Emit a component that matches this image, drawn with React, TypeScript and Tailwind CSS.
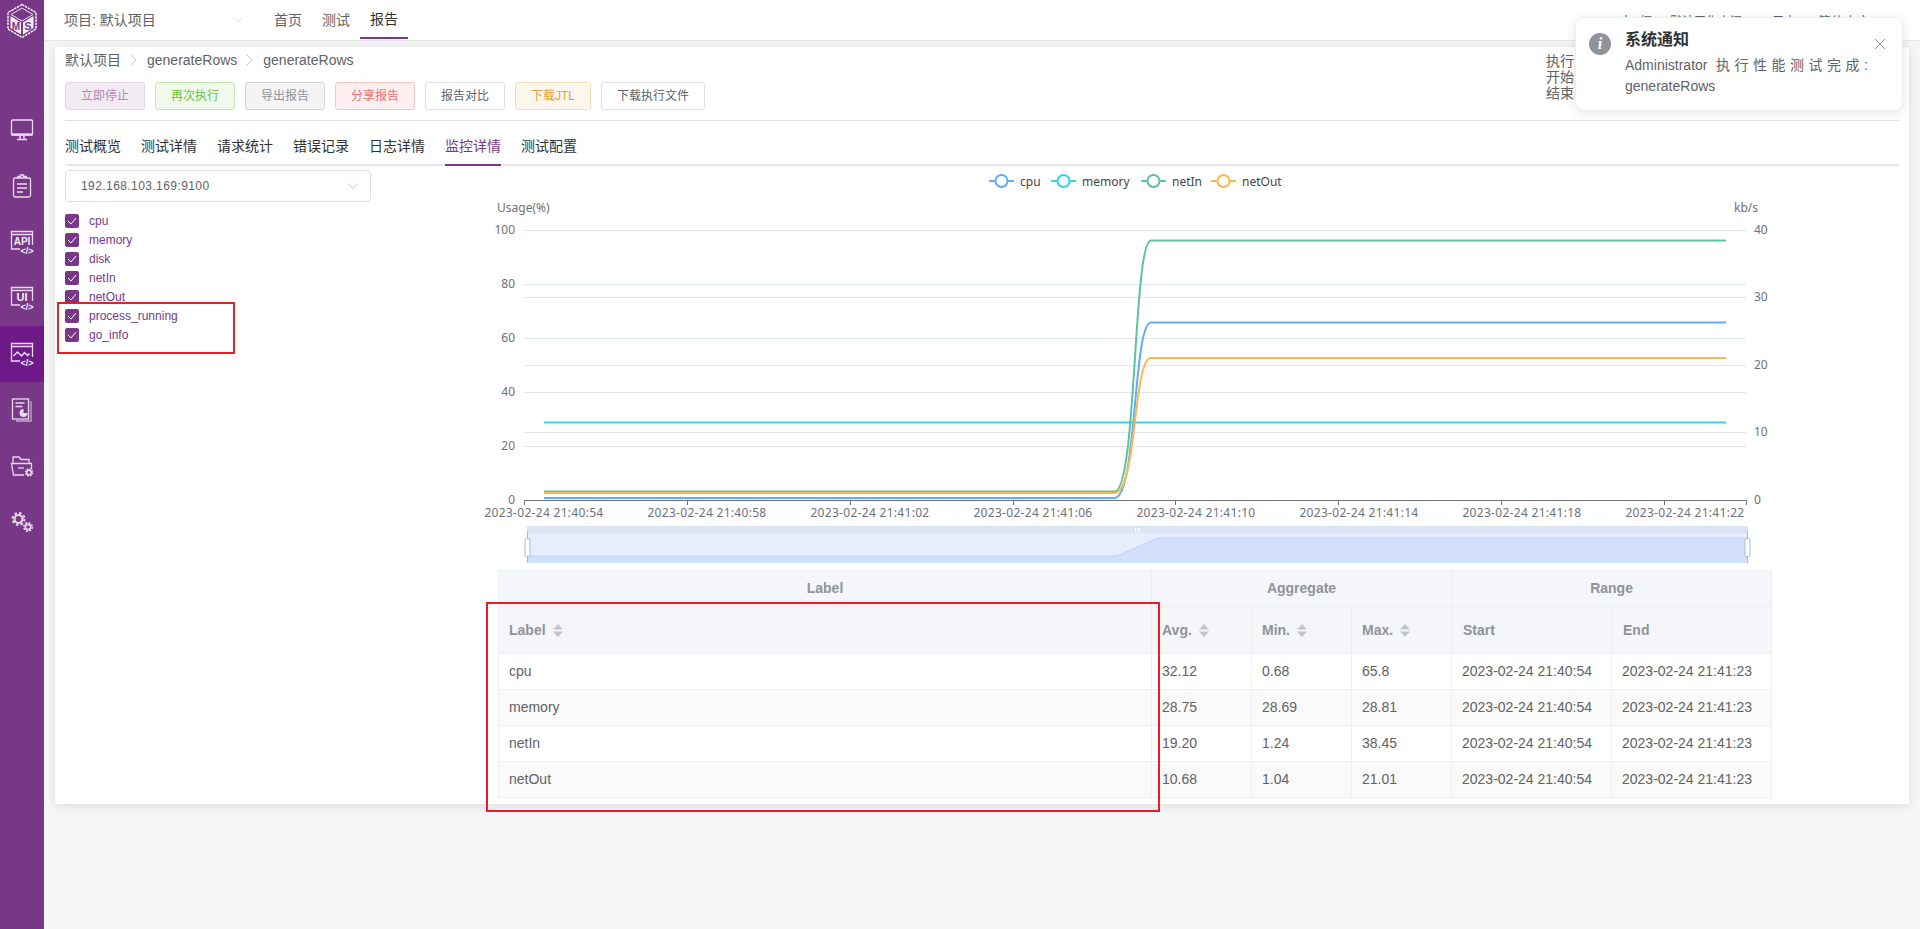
import React from "react";

const purple = "#783887";

const navIcons = [
  // monitor
  <svg key="monitor" width="24" height="22" viewBox="0 0 24 22" fill="none" stroke="#ead9ee" strokeWidth="1.3">
    <rect x="1.5" y="1" width="21" height="15" rx="1" />
    <path d="M1.5 15.5h21" strokeWidth="2.4" />
    <path d="M10 17v2.5M14 17v2.5M7 20.5h10" strokeWidth="1.6" />
  </svg>,
  // clipboard
  <svg key="clip" width="24" height="24" viewBox="0 0 24 24" fill="none" stroke="#ead9ee" strokeWidth="1.3">
    <rect x="3.5" y="4" width="17" height="19" rx="1.5" />
    <path d="M8 4V2.5h2.5V1h3v1.5H16V4" strokeWidth="1.6" />
    <path d="M7 10h10M7 14h10M7 18h6" />
  </svg>,
  // api
  <svg key="api" width="24" height="24" viewBox="0 0 24 24" fill="none" stroke="#ead9ee" strokeWidth="1.3">
    <path d="M10 19H1.5V1.5h21V15M1.5 4.5h21" />
    <text x="12" y="14.5" textAnchor="middle" fontSize="10" fontWeight="700" fill="#f6eef7" stroke="none" fontFamily="Liberation Sans">API</text>
    <text x="17" y="23.5" textAnchor="middle" fontSize="9" fontWeight="700" fill="#f6eef7" stroke="none" fontFamily="Liberation Sans">&lt;/&gt;</text>
  </svg>,
  // ui
  <svg key="ui" width="24" height="24" viewBox="0 0 24 24" fill="none" stroke="#ead9ee" strokeWidth="1.3">
    <path d="M10 19H1.5V1.5h21V15M1.5 4.5h21" />
    <text x="12" y="15" textAnchor="middle" fontSize="11" fontWeight="700" fill="#f6eef7" stroke="none" fontFamily="Liberation Sans">UI</text>
    <text x="17" y="23.5" textAnchor="middle" fontSize="9" fontWeight="700" fill="#f6eef7" stroke="none" fontFamily="Liberation Sans">&lt;/&gt;</text>
  </svg>,
  // performance
  <svg key="perf" width="24" height="24" viewBox="0 0 24 24" fill="none" stroke="#ead9ee" strokeWidth="1.3">
    <path d="M10 19H1.5V1.5h21V15M1.5 4.5h21" />
    <path d="M3.5 14l4-4 4 4 3-3.5 3 3 2-2" strokeWidth="1.5" />
    <text x="17" y="23.5" textAnchor="middle" fontSize="9" fontWeight="700" fill="#f6eef7" stroke="none" fontFamily="Liberation Sans">&lt;/&gt;</text>
  </svg>,
  // report
  <svg key="report" width="22" height="24" viewBox="0 0 22 24" fill="none" stroke="#ead9ee" strokeWidth="1.3">
    <rect x="1.5" y="1" width="16" height="20" />
    <path d="M20 3v20H5" strokeOpacity=".7" />
    <path d="M4.5 5h9M4.5 8.5h7" />
    <path d="M12.5 11a4 4 0 1 0 4 4h-4z" fill="#ead9ee" stroke="none" />
  </svg>,
  // folder
  <svg key="folder" width="24" height="22" viewBox="0 0 24 22" fill="none" stroke="#ead9ee" strokeWidth="1.3">
    <path d="M14 20H3.5L1.5 8.5h20v6M3 8V2h6l2 2.5h8V8" />
    <path d="M8 13h6" />
    <circle cx="19" cy="17.5" r="2.3" strokeWidth="1.6" />
    <circle cx="19" cy="17.5" r="3.6" strokeWidth="1.4" strokeDasharray="1.6 1.2" />
  </svg>,
  // settings
  <svg key="gears" width="24" height="22" viewBox="0 0 24 22" fill="none" stroke="#ead9ee">
    <circle cx="8.5" cy="8" r="4" strokeWidth="2.2" />
    <circle cx="8.5" cy="8" r="6" strokeWidth="2" strokeDasharray="2.4 2.3" />
    <circle cx="18" cy="16" r="2.6" strokeWidth="1.7" />
    <circle cx="18" cy="16" r="4.2" strokeWidth="1.6" strokeDasharray="1.9 1.4" />
  </svg>,
];

const Logo = () => (
  <svg width="32" height="36" viewBox="0 0 32 36" fill="none">
    <path d="M16 1.5 30 9.5V26L16 34.5 2 26V9.5z" stroke="#fff" strokeWidth="1.4" strokeDasharray="2.5 .8" />
    <path d="M16 5 27 11.5 16 18 5 11.5z" fill="#783887" stroke="#f0e6f2" strokeWidth="1" />
    <path d="M4.5 13 15 19.5V31.5L4.5 25z" fill="#f7f0f8" />
    <path d="M27.5 13 17 19.5V31.5L27.5 25z" fill="#f7f0f8" />
    <text x="10" y="27" textAnchor="middle" fontSize="10" fontWeight="700" fill="#783887" fontFamily="Liberation Sans">M</text>
    <text x="22" y="27" textAnchor="middle" fontSize="11" fontWeight="700" fill="#783887" fontFamily="Liberation Sans">S</text>
  </svg>
);

const Chevron = ({ className }: { className: string }) => (
  <svg className={className} viewBox="0 0 12 8" fill="none" stroke="#c0c4cc" strokeWidth="1">
    <path d="M1 1.5l5 5 5-5" />
  </svg>
);

const Crumb = () => (
  <svg className="ml-[9px] mr-[10px] w-[7px] h-[12px]" viewBox="0 0 7 12" fill="none" stroke="#c0c4cc" strokeWidth="1">
    <path d="M1 1l5 5-5 5" />
  </svg>
);

const SortCaret = () => (
  <svg className="inline-block ml-[7px] w-[10px] h-[13px] align-[-2px]" viewBox="0 0 10 13">
    <path d="M5 0l5 5.5H0z" fill="#c0c4cc" />
    <path d="M5 13L0 7.5h10z" fill="#c0c4cc" />
  </svg>
);

const buttons = [
  { label: "立即停止", cls: "bg-[#f2ebf3] border-[#e4d7e7] text-[#ae88b7] w-[80px]" },
  { label: "再次执行", cls: "bg-[#f0f9eb] border-[#c2e7b0] text-[#67c23a] w-[80px]" },
  { label: "导出报告", cls: "bg-[#f4f4f5] border-[#d3d4d6] text-[#909399] w-[80px]" },
  { label: "分享报告", cls: "bg-[#fef0f0] border-[#fbc4c4] text-[#f56c6c] w-[80px]" },
  { label: "报告对比", cls: "bg-white border-[#dcdfe6] text-[#606266] w-[80px]" },
  { label: "下载JTL", cls: "bg-[#fdf6ec] border-[#f5dab1] text-[#e6a23c] w-[76px]" },
  { label: "下载执行文件", cls: "bg-white border-[#dcdfe6] text-[#606266] w-[104px]" },
];

const tabs = ["测试概览", "测试详情", "请求统计", "错误记录", "日志详情", "监控详情", "测试配置"];
const checks = ["cpu", "memory", "disk", "netIn", "netOut", "process_running", "go_info"];

const rows = [
  ["cpu", "32.12", "0.68", "65.8"],
  ["memory", "28.75", "28.69", "28.81"],
  ["netIn", "19.20", "1.24", "38.45"],
  ["netOut", "10.68", "1.04", "21.01"],
];

const step = (low: number, high: number) =>
  `M544 ${low}L1114.5 ${low}C1137 ${low} 1133 ${high} 1151 ${high}L1726 ${high}`;

const legend = [
  { name: "cpu", color: "#60acfc", x: 989 },
  { name: "memory", color: "#32d3eb", x: 1051 },
  { name: "netIn", color: "#5bc49f", x: 1141 },
  { name: "netOut", color: "#feb64d", x: 1211 },
];

const chartFont = "'Noto Sans','Noto Sans CJK SC',sans-serif";

const Chart = () => {
  const xTicks = [524, 687, 850, 1013, 1175, 1338, 1501, 1664, 1746];
  const xLabels = ["21:40:54", "21:40:58", "21:41:02", "21:41:06", "21:41:10", "21:41:14", "21:41:18", "21:41:22"];
  return (
    <svg className="block w-[1320px] h-[400px]" viewBox="480 170 1320 400" fontFamily={chartFont} fontSize="12">
      {legend.map((l) => (
        <g key={l.name}>
          <line x1={l.x} x2={l.x + 25} y1="181" y2="181" stroke={l.color} strokeWidth="2" />
          <circle cx={l.x + 12.5} cy="181" r="6" fill="#fff" stroke={l.color} strokeWidth="2" />
          <text x={l.x + 31} y="185.5" fill="#444">{l.name}</text>
        </g>
      ))}
      <text x="497" y="212" fill="#6e7079">Usage(%)</text>
      <text x="1734" y="212" fill="#6e7079">kb/s</text>
      {[230, 284, 338, 392, 446].map((y) => (
        <line key={y} x1="524" x2="1746" y1={y + 0.5} y2={y + 0.5} stroke="#e0e6f1" />
      ))}
      {[297, 365, 432].map((y) => (
        <line key={y} x1="524" x2="1746" y1={y + 0.5} y2={y + 0.5} stroke="#e0e6f1" />
      ))}
      {[100, 80, 60, 40, 20, 0].map((v, i) => (
        <text key={v} x="515" y={233.5 + i * 54} textAnchor="end" fill="#6e7079">{v}</text>
      ))}
      {[40, 30, 20, 10, 0].map((v, i) => (
        <text key={v} x="1754" y={233.5 + i * 67.5} fill="#6e7079">{v}</text>
      ))}
      <line x1="524" x2="1746" y1="500.5" y2="500.5" stroke="#6e7079" />
      {xTicks.map((x) => (
        <line key={x} x1={x + 0.5} x2={x + 0.5} y1="500" y2="505" stroke="#6e7079" />
      ))}
      {xLabels.map((t, i) => (
        <text key={t} x={544 + i * 163} y="516.5" textAnchor="middle" fill="#6e7079" letterSpacing=".3">{`2023-02-24 ${t}`}</text>
      ))}
      <path d={step(498, 322.5)} fill="none" stroke="#60acfc" strokeWidth="2" />
      <path d="M544 422.5H1726" fill="none" stroke="#32d3eb" strokeWidth="2" />
      <path d={step(491.5, 240.5)} fill="none" stroke="#5bc49f" strokeWidth="2" />
      <path d={step(493, 358)} fill="none" stroke="#feb64d" strokeWidth="2" />

      <rect x="527" y="526" width="1221" height="7" fill="#dbe4f2" />
      <rect x="527" y="533" width="1221" height="30" fill="#e6edfc" />
      <path d="M527 556H1117L1158 538H1748V563H527z" fill="#d2dffa" />
      <path d="M527 556H1117L1158 538H1748" fill="none" stroke="#bfd2f8" />
      <path d="M1135.5 528v4M1137.5 528v4M1139.5 528v4" stroke="#fff" />
      <line x1="527.5" x2="527.5" y1="531" y2="563" stroke="#acb8d1" />
      <line x1="1747.5" x2="1747.5" y1="531" y2="563" stroke="#acb8d1" />
      <rect x="525" y="538.5" width="5" height="18" rx="1.5" fill="#fff" stroke="#acb8d1" />
      <rect x="1745" y="538.5" width="5" height="18" rx="1.5" fill="#fff" stroke="#acb8d1" />
    </svg>
  );
};

const th = "border border-[#ebeef5] bg-[#f5f6fa] text-[#909399] text-[14px] font-bold p-0";
const td = "border border-[#ebeef5] text-[#606266] text-[14px] pl-[10px] h-[36px]";

const StatsTable = () => (
  <table className="ml-[18px] w-[1273px] table-fixed border-collapse">
    <colgroup>
      <col className="w-[653px]" />
      <col className="w-[100px]" />
      <col className="w-[100px]" />
      <col className="w-[100px]" />
      <col className="w-[160px]" />
      <col className="w-[160px]" />
    </colgroup>
    <thead>
      <tr className="h-[36px]">
        <th className={`${th} text-center`}>Label</th>
        <th colSpan={3} className={`${th} text-center`}>Aggregate</th>
        <th colSpan={2} className={`${th} text-center`}>Range</th>
      </tr>
      <tr className="h-[47px]">
        {["Label", "Avg.", "Min.", "Max."].map((h) => (
          <th key={h} className={`${th} text-left pl-[10px]`}>
            {h}
            <SortCaret />
          </th>
        ))}
        <th className={`${th} text-left pl-[11px]`}>Start</th>
        <th className={`${th} text-left pl-[11px]`}>End</th>
      </tr>
    </thead>
    <tbody>
      {rows.map((r, i) => (
        <tr key={r[0]} className={i % 2 ? "bg-[#fafafa]" : "bg-white"}>
          {r.map((c, j) => (
            <td key={j} className={td}>{c}</td>
          ))}
          <td className={td}>2023-02-24 21:40:54</td>
          <td className={td}>2023-02-24 21:41:23</td>
        </tr>
      ))}
    </tbody>
  </table>
);

const Notification = () => (
  <div className="absolute left-[1575px] top-[17px] w-[328px] h-[94px] bg-white rounded-[8px] border border-[#ebeef5] shadow-[0_2px_12px_0_rgba(0,0,0,0.1)] flex pl-[13px] pt-[14px]">
    <div className="w-[22px] h-[22px] mt-[1px] rounded-full bg-[#909399] text-white flex items-center justify-center italic font-bold text-[16px] font-['Liberation_Serif',serif]">i</div>
    <div className="ml-[14px] w-[243px]">
      <div className="text-[16px] font-bold text-[#303133] leading-[16px]">系统通知</div>
      <p className="mt-[7px] text-[14px] leading-[21px] text-[#606266] text-justify">Administrator 执行性能测试完成: generateRows</p>
    </div>
    <svg className="absolute left-[299px] top-[21px] w-[10px] h-[10px]" viewBox="0 0 10 10" stroke="#909399" strokeWidth="1">
      <path d="M0 0l10 10M10 0L0 10" />
    </svg>
  </div>
);

export default function App() {
  return (
    <div className="relative flex h-[929px] overflow-hidden bg-[#f5f6f8] font-['Liberation_Sans','Noto_Sans_CJK_SC',sans-serif]">
      <aside className="w-[44px] shrink-0 bg-[#783887]">
        <div className="h-[102px] pt-[3px] flex justify-center items-start">
          <Logo />
        </div>
        {navIcons.map((icon, i) => (
          <div key={i} className={`h-[56px] flex items-center justify-center ${i === 4 ? "bg-[#6f1a89]" : ""}`}>
            {icon}
          </div>
        ))}
      </aside>

      <div className="flex-1 min-w-0">
        <header className="h-[41px] bg-white border-b border-[#e6e6e6] flex items-stretch">
          <div className="w-[200px] pl-[20px] flex items-center justify-between pr-[2px] text-[14px] text-[#606266]">
            <span>项目: 默认项目</span>
            <Chevron className="w-[8px] h-[6px]" />
          </div>
          <nav className="ml-[20px] flex text-[14px] text-[#606266]">
            <a className="w-[48px] flex items-center justify-center">首页</a>
            <a className="w-[48px] flex items-center justify-center">测试</a>
            <a className="w-[48px] flex items-center justify-center text-[#303133] border-b-2 border-[#783887] mb-[1px] pt-[2px]">报告</a>
          </nav>
          <div className="ml-auto pr-[50px] pt-[4px] flex items-center text-[12px] text-[#606266]">
            <span>人</span>
            <span className="ml-[8px]">框</span>
            <span className="ml-[18px]">默认工作空间</span>
            <span className="ml-[30px]">用户</span>
            <span className="ml-[22px] text-[13px]">简体中文</span>
          </div>
        </header>

        <main className="px-[11px] pt-[6px]">
          <section className="h-[757px] bg-white px-[10px] pt-[3px] rounded-[2px] shadow-[0_2px_12px_0_rgba(0,0,0,0.1)]">
            <div className="flex justify-between h-[70px]">
              <div>
                <div className="h-[20px] flex items-center text-[14px] text-[#606266]">
                  <span>默认项目</span>
                  <Crumb />
                  <span>generateRows</span>
                  <Crumb />
                  <span>generateRows</span>
                </div>
                <div className="mt-[12px] flex gap-[10px]">
                  {buttons.map((b) => (
                    <button key={b.label} className={`h-[28px] border rounded-[3px] text-[12px] ${b.cls}`}>
                      {b.label}
                    </button>
                  ))}
                </div>
              </div>
              <div className="w-[353px] mt-[3px] text-[14px] leading-[16px] text-[#606266]">
                <div>执行人: Administrator</div>
                <div>开始时间: 2023-02-24 21:40:54</div>
                <div>结束时间: 2023-02-24 21:41:23</div>
              </div>
            </div>
            <div className="border-t border-[#dcdfe6]" />

            <div className="mt-[5px] h-[40px] flex gap-[20px] border-b-2 border-[#e4e7ed] text-[14px] text-[#303133]">
              {tabs.map((t) => (
                <div
                  key={t}
                  className={`h-[40px] leading-[40px] ${t === "监控详情" ? "text-[#783887] border-b-2 border-[#783887]" : ""}`}
                >
                  {t}
                </div>
              ))}
            </div>

            <div className="mt-[4px] flex">
              <div className="w-[415px] shrink-0">
                <div className="w-[306px] h-[32px] border border-[#dcdfe6] rounded-[4px] flex items-center justify-between pl-[15px] pr-[11px] text-[12px] text-[#606266] tracking-[.42px]">
                  <span>192.168.103.169:9100</span>
                  <Chevron className="w-[12px] h-[8px]" />
                </div>
                <div className="mt-[9px] flex flex-col">
                  {checks.map((c) => (
                    <label key={c} className="h-[19px] flex items-center text-[12px]" style={{ color: purple }}>
                      <span className="w-[14px] h-[14px] rounded-[2px] bg-[#783887] flex items-center justify-center">
                        <svg className="w-[10px] h-[8px]" viewBox="0 0 10 8" fill="none" stroke="#fff" strokeWidth="1">
                          <path d="M1 4l3 3 5-6" />
                        </svg>
                      </span>
                      <span className="ml-[10px]">{c}</span>
                    </label>
                  ))}
                </div>
              </div>
              <div className="flex-1 min-w-0">
                <Chart />
                <StatsTable />
              </div>
            </div>
          </section>
        </main>
      </div>

      <Notification />
      <div className="absolute left-[57px] top-[302px] w-[178px] h-[52px] border-2 border-[#ed1c24]" />
      <div className="absolute left-[486px] top-[602px] w-[674px] h-[210px] border-2 border-[#ed1c24]" />
    </div>
  );
}
